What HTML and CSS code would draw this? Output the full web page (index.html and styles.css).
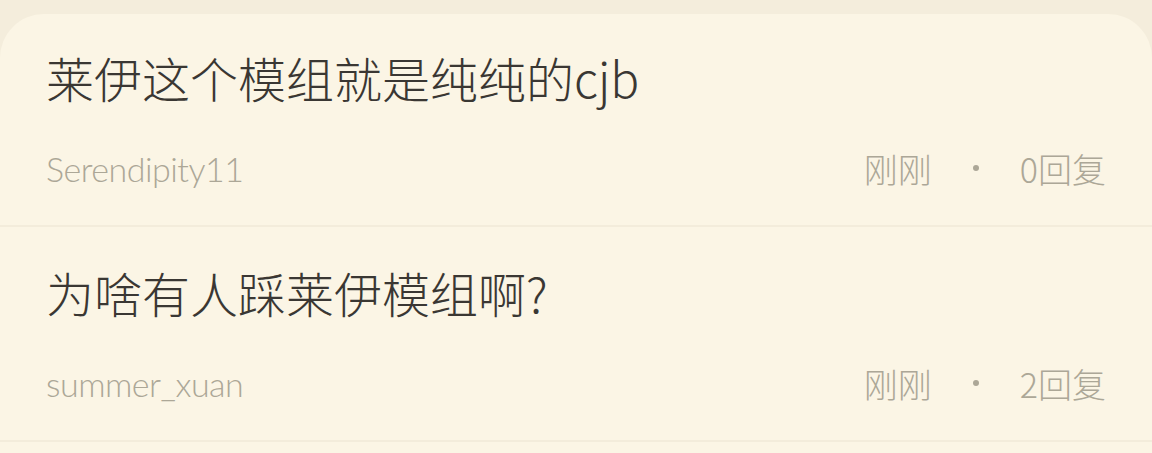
FILE: index.html
```html
<!DOCTYPE html>
<html lang="zh-CN">
<head>
  <meta charset="UTF-8">
  <meta name="viewport" content="width=device-width, initial-scale=1.0">
  <title>帖子列表</title>
  <link rel="stylesheet" href="styles.css">
</head>
<body>
  <div class="post-list">
    <div class="post">
      <div class="post-title">莱伊这个模组就是纯纯的cjb</div>
      <div class="post-meta">
        <span class="author">Serendipity11</span>
        <span class="info">
          <span class="time">刚刚</span>
          <span class="dot"></span>
          <span class="replies">0回复</span>
        </span>
      </div>
    </div>

    <div class="post">
      <div class="post-title">为啥有人踩莱伊模组啊?</div>
      <div class="post-meta">
        <span class="author">summer_xuan</span>
        <span class="info">
          <span class="time">刚刚</span>
          <span class="dot"></span>
          <span class="replies">2回复</span>
        </span>
      </div>
    </div>
  </div>
</body>
</html>
```

FILE: styles.css
```css
body {
  margin: 0;
  background-color: #f4eddc;
  font-family: "Noto Sans CJK SC", "Noto Sans", sans-serif;
  overflow: hidden;
}

.post-list {
  margin-top: 14px;
  background-color: #fbf5e5;
  border-radius: 44px 44px 0 0;
  height: calc(100vh - 14px);
}

.post {
  padding: 35px 46px 35px;
  border-bottom: 2px solid #f3ecdb;
}

.post:first-child {
  padding-top: 33px;
}

.post-title {
  font-size: 48px;
  font-weight: 300;
  line-height: 60px;
  color: #3a3733;
  white-space: nowrap;
}

.post-meta {
  display: flex;
  justify-content: space-between;
  align-items: center;
  margin-top: 39px;
  height: 44px;
  font-size: 34px;
  font-weight: 300;
  color: #aca797;
}

.author {
  font-family: Lato, "Noto Sans", sans-serif;
  letter-spacing: -0.5px;
}

.info {
  display: flex;
  align-items: center;
}

.dot {
  width: 6px;
  height: 6px;
  border-radius: 50%;
  background-color: #aca797;
  margin: 0 41px 0 41px;
}
```
